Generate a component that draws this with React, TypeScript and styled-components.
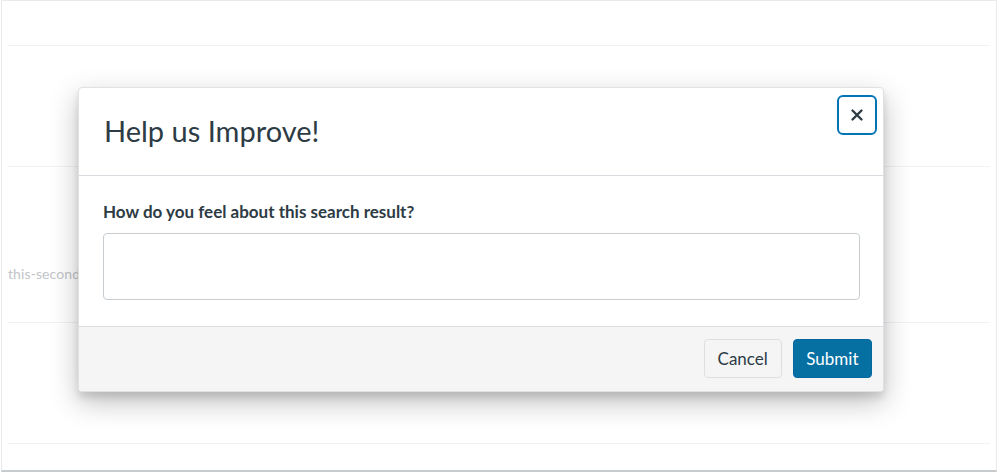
import React from 'react';
import styled, { createGlobalStyle } from 'styled-components';

const GlobalStyle = createGlobalStyle`
  html, body {
    margin: 0;
    padding: 0;
    background: #fff;
    font-family: Lato, "Open Sans", sans-serif;
  }
  * { box-sizing: border-box; }
`;

/* background page: a framed table of rows, the modal sits on top of it */
const Page = styled.div`
  position: relative;
  width: 999px;
  height: 473px;
  overflow: hidden;
`;

const Frame = styled.div`
  margin: 0 2px 0 1px;
  height: 472px;
  border: 1px solid #e8eaec;
  border-bottom: 2px solid #c8cbce;
  padding: 0 6px;
  display: flex;
  flex-direction: column;
`;

const Row = styled.div<{ h: number }>`
  flex: 0 0 ${p => p.h}px;
  border-bottom: 1px solid #f1f2f3;
  display: flex;
  align-items: flex-start;
  &:last-child {
    border-bottom: 0;
    flex: 1 1 auto;
  }
`;

const FadedText = styled.span`
  margin-top: 98px;
  font-size: 14px;
  color: #c2c5c8;
  letter-spacing: 0.1px;
`;

const Modal = styled.div`
  position: absolute;
  left: 78px;
  top: 87px;
  width: 806px;
  background: #fff;
  border: 1px solid #dfe2e5;
  border-radius: 4px;
  box-shadow: 0 6px 7px rgba(0, 0, 0, 0.1), 0 10px 28px rgba(0, 0, 0, 0.25);
  overflow: hidden;
`;

const Header = styled.div`
  position: relative;
  height: 88px;
  padding: 0 24px 0 25px;
  display: flex;
  align-items: center;
  border-bottom: 1px solid #d9dde1;
`;

const Title = styled.h2`
  margin: 0;
  font-size: 29px;
  font-weight: 400;
  color: #2d3b45;
  line-height: 1.2;
`;

const CloseButton = styled.button`
  position: absolute;
  top: 7px;
  right: 6px;
  width: 40px;
  height: 40px;
  border: 2px solid #0374b5;
  border-radius: 6px;
  background: #fff;
  display: flex;
  align-items: center;
  justify-content: center;
  padding: 0;
  cursor: pointer;
`;

const Body = styled.div`
  padding: 24px 24px 26px 24px;
`;

const Label = styled.label`
  display: block;
  font-size: 17px;
  font-weight: 700;
  line-height: 24px;
  color: #2d3b45;
  margin-bottom: 9px;
`;

const TextArea = styled.textarea`
  display: block;
  width: 757px;
  height: 67px;
  border: 1px solid #c7cdd1;
  border-radius: 4px;
  resize: none;
  font-family: inherit;
  font-size: 16px;
  padding: 8px 12px;
  outline: none;
`;

const Footer = styled.div`
  background: #f5f5f5;
  border-top: 1px solid #d9dde1;
  padding: 12px 11px 13px;
  display: flex;
  justify-content: flex-end;
  gap: 11px;
`;

const Button = styled.button<{ primary?: boolean }>`
  height: 39px;
  padding: 0 ${p => (p.primary ? '12.5px' : '13px')};
  border-radius: 4px;
  font-family: inherit;
  font-size: 17px;
  cursor: pointer;
  border: 1px solid ${p => (p.primary ? '#0668a0' : '#dcdfe2')};
  background: ${p => (p.primary ? '#0770a3' : '#f5f5f5')};
  color: ${p => (p.primary ? '#fff' : '#2d3b45')};
`;

const XIcon = () => (
  <svg width="14" height="14" viewBox="0 0 14 14">
    <path d="M2.5 2.5 L11.5 11.5 M11.5 2.5 L2.5 11.5" stroke="#2d3b45" strokeWidth="2.4" strokeLinecap="round" />
  </svg>
);

export default function App() {
  return (
    <Page>
      <GlobalStyle />
      <Frame>
        <Row h={45} />
        <Row h={121} />
        <Row h={156}>
          <FadedText>this-second-result</FadedText>
        </Row>
        <Row h={121} />
        <Row h={27} />
      </Frame>

      <Modal role="dialog">
        <Header>
          <Title>Help us Improve!</Title>
          <CloseButton aria-label="Close">
            <XIcon />
          </CloseButton>
        </Header>
        <Body>
          <Label>How do you feel about this search result?</Label>
          <TextArea />
        </Body>
        <Footer>
          <Button>Cancel</Button>
          <Button primary>Submit</Button>
        </Footer>
      </Modal>
    </Page>
  );
}
